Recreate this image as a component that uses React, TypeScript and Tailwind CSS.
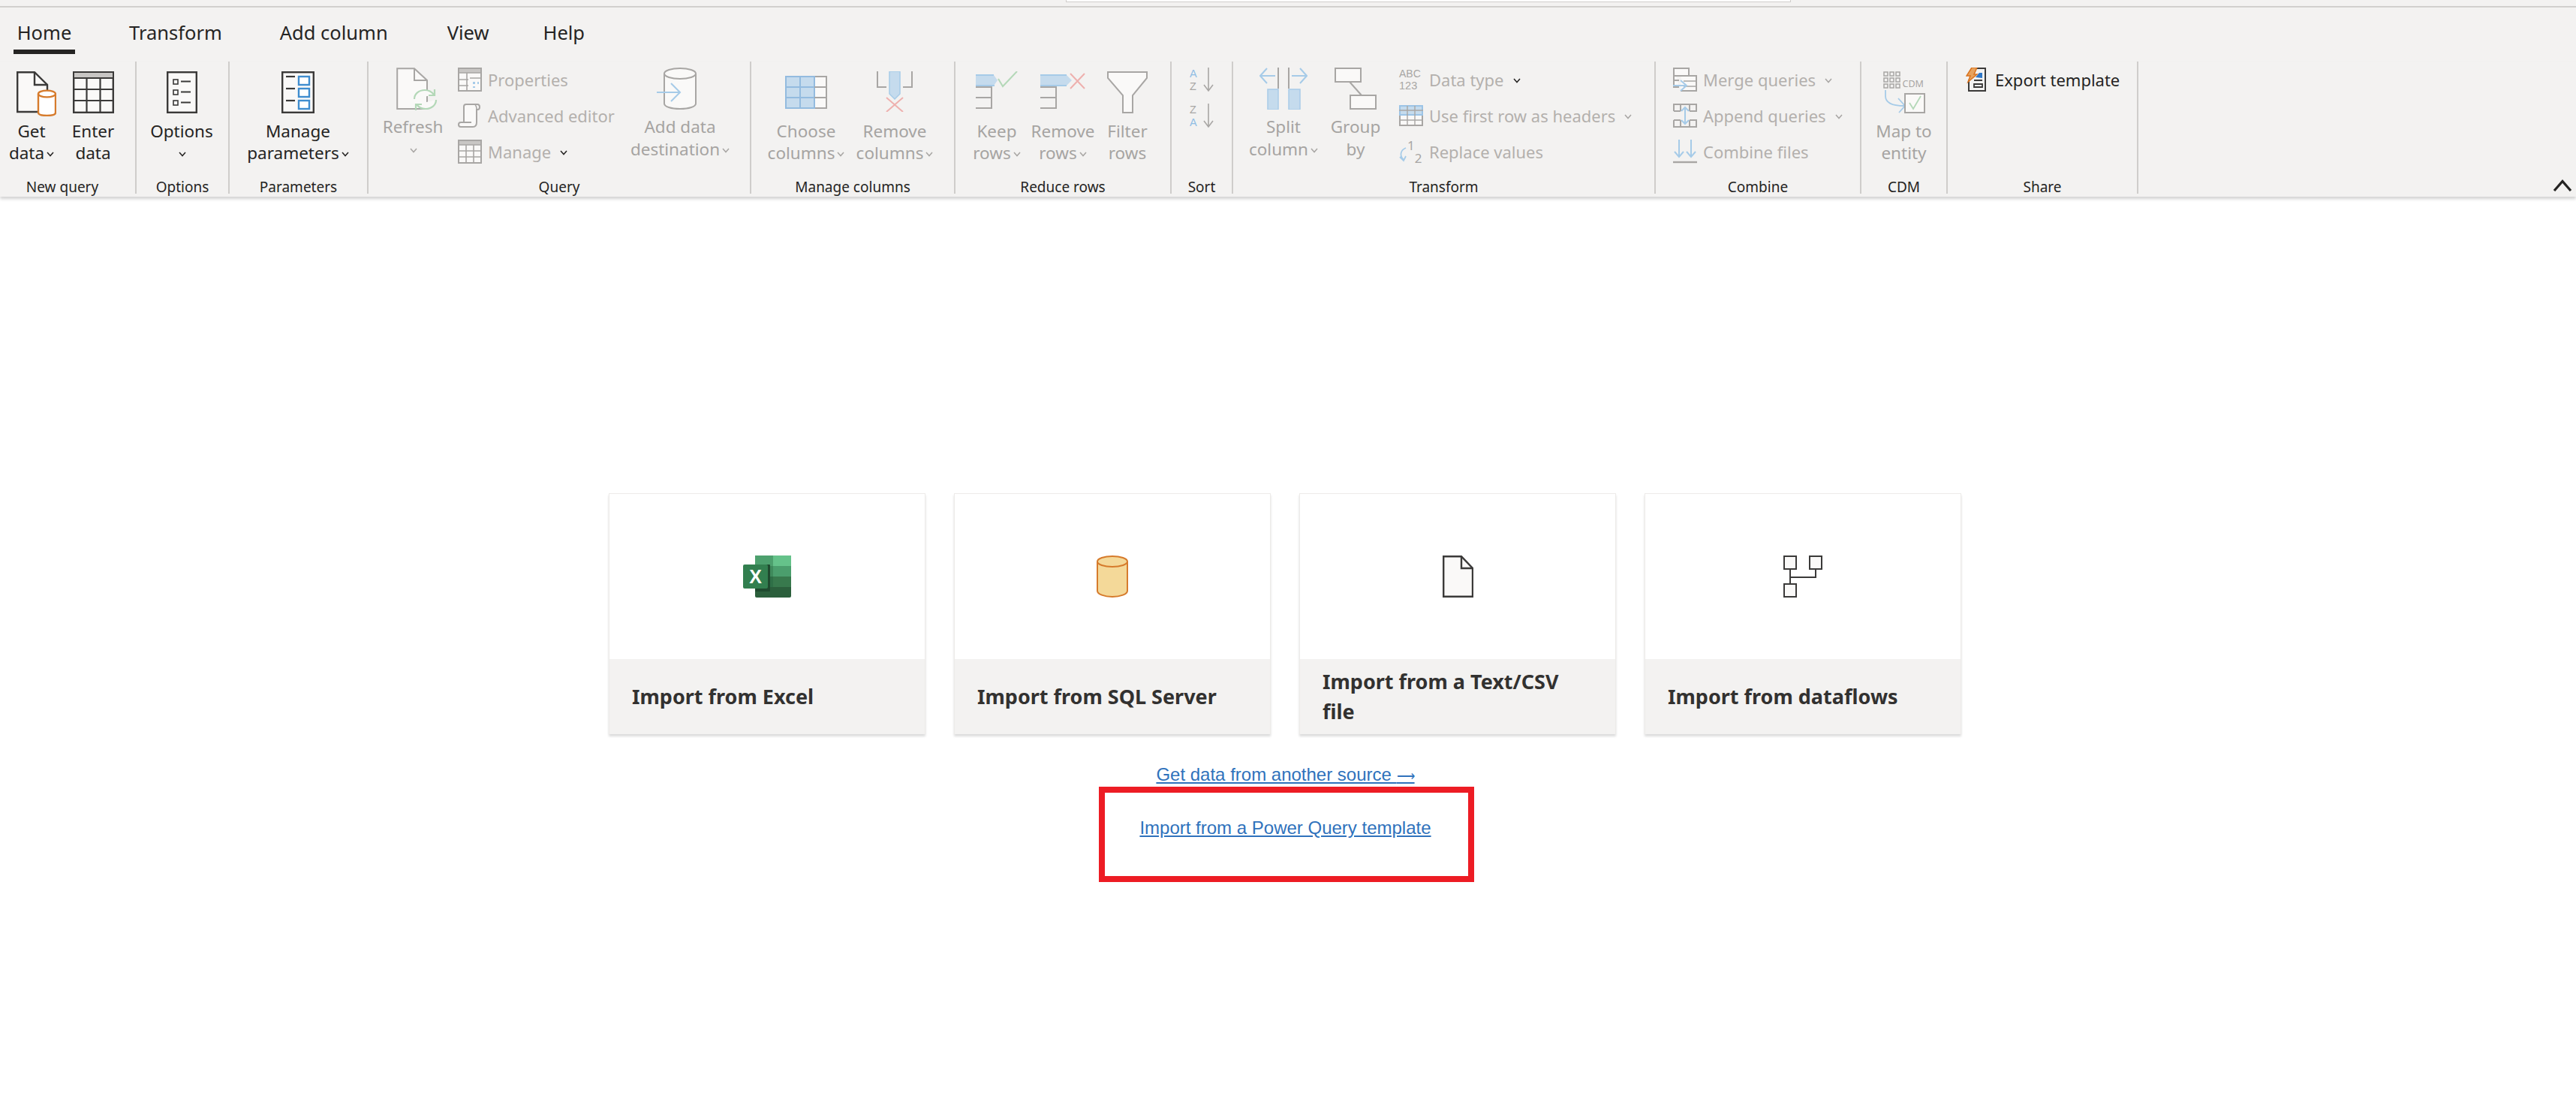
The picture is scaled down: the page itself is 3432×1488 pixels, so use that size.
import type { ReactNode } from "react";

const DARK = "#3b3a39";
const GRAY = "#a8a6a4";
const SOFT = "#faf9f8";
const BLUE = "#a6cbe8";
const BLUE_FILL = "#c5dbed";
const GREEN = "#b4d8b8";
const RED = "#eeb0ae";

function Chevron({ dark = false, faded = false }: { dark?: boolean; faded?: boolean }) {
  const stroke = dark ? "#252423" : faded ? "#a8a6a4" : "#252423";
  return (
    <svg width="10" height="7" viewBox="0 0 10 7" className="ml-[3px] inline-block align-middle" fill="none">
      <path d="M1 1l4 4.6L9 1" stroke={stroke} strokeWidth="1.5" />
    </svg>
  );
}

function Large({
  w,
  icon,
  lines,
  chevron = false,
  loweredChevron = false,
  disabled = false,
  high = false,
}: {
  w: string;
  icon: ReactNode;
  lines: string[];
  chevron?: boolean;
  loweredChevron?: boolean;
  disabled?: boolean;
  high?: boolean;
}) {
  return (
    <div className={`flex shrink-0 flex-col items-center ${w} ${high ? "pt-[8px]" : "pt-[13px]"}`}>
      <div className={`flex items-start justify-center ${high ? "h-[64px]" : "h-[65px]"}`}>{icon}</div>
      <div
        className={`whitespace-nowrap text-center text-[22.5px] ${high ? "leading-[30px]" : "leading-[29px]"} ${
          disabled ? "text-[#a6a4a2]" : "text-[#252423]"
        }`}
      >
        {lines.map((line, i) => (
          <div key={line}>
            {line}
            {chevron && i === lines.length - 1 ? <Chevron faded={disabled} /> : null}
          </div>
        ))}
        {loweredChevron ? (
          <div>
            <Chevron faded={disabled} />
          </div>
        ) : null}
      </div>
    </div>
  );
}

function Small({
  icon,
  label,
  chevron,
}: {
  icon: ReactNode;
  label: string;
  chevron?: "dark" | "faded";
}) {
  return (
    <div className="flex h-[32px] items-center gap-[8px]">
      <div className="flex w-[32px] shrink-0 justify-center">{icon}</div>
      <span className="whitespace-nowrap text-[22px] leading-[32px] text-[#b3b0ad]">{label}</span>
      {chevron ? (
        <span className="ml-[1px]">
          <Chevron dark={chevron === "dark"} faded={chevron === "faded"} />
        </span>
      ) : null}
    </div>
  );
}

function Group({ w, label, pr = "", children }: { w: string; label: string; pr?: string; children: ReactNode }) {
  return (
    <section className={`flex h-[176px] shrink-0 flex-col border-r-2 border-[#cfcdcb] ${w}`}>
      <div className="flex min-h-0 flex-1">{children}</div>
      <div className={`h-[18px] whitespace-nowrap text-center text-[19px] leading-[18px] text-[#252423] ${pr}`}>{label}</div>
    </section>
  );
}

function GetDataIcon() {
  return (
    <svg width="66" height="60" viewBox="-13 0 66 60" fill="none">
      <path d="M1.2 1.2H24L41 18V54H1.2Z" fill={SOFT} stroke={DARK} strokeWidth="2.4" />
      <path d="M24 1.2V18H41.5" stroke={DARK} strokeWidth="2.4" />
      <path d="M29 30V55c0 2.6 5 4 11.5 4s11.5-1.4 11.5-4V30" fill="#fff" stroke="#d67b2c" strokeWidth="2.4" />
      <ellipse cx="40.5" cy="30" rx="11.5" ry="4.4" fill="#fff" stroke="#d67b2c" strokeWidth="2.4" />
    </svg>
  );
}

function EnterDataIcon() {
  return (
    <svg width="55" height="56" viewBox="0 0 55 56" fill="none">
      <rect x="1.2" y="1.2" width="52.6" height="53.6" fill={SOFT} stroke={DARK} strokeWidth="2.4" />
      <rect x="2" y="2" width="51" height="7" fill="#c8c6c4" />
      <path d="M0 9h55M0 24h55M0 39h55M18.5 9v46M36.5 9v46" stroke={DARK} strokeWidth="2.2" />
    </svg>
  );
}

function OptionsIcon() {
  return (
    <svg width="41" height="56" viewBox="0 0 41 56" fill="none">
      <rect x="1.2" y="1.2" width="38.6" height="53.6" fill={SOFT} stroke={DARK} strokeWidth="2.4" />
      {[11, 25, 39].map((y) => (
        <g key={y}>
          <rect x="9" y={y} width="6" height="6" fill="none" stroke={DARK} strokeWidth="1.6" />
          <path d={`M19 ${y + 2.5}h13`} stroke={DARK} strokeWidth="2" />
        </g>
      ))}
    </svg>
  );
}

function ParamsIcon() {
  return (
    <svg width="44" height="56" viewBox="0 0 44 56" fill="none">
      <rect x="1.2" y="1.2" width="41.6" height="53.6" fill={SOFT} stroke={DARK} strokeWidth="2.4" />
      {[7, 23, 39].map((y) => (
        <g key={y}>
          <path d={`M6 ${y}h12`} stroke={DARK} strokeWidth="2.2" />
          <rect x="23" y={y} width="14" height="11" fill="#fff" stroke="#3f8dcf" strokeWidth="2.4" />
        </g>
      ))}
    </svg>
  );
}

function RefreshIcon() {
  return (
    <svg width="68" height="60" viewBox="-12 0 68 60" fill="none">
      <path d="M1.2 1.2H24L41 17V55H1.2Z" fill={SOFT} stroke={GRAY} strokeWidth="2" />
      <path d="M24 1.2V17H41" stroke={GRAY} strokeWidth="2" />
      <path d="M24 42c0-7 6-12 14-12 5 0 9 2 12 6M53 43c0 7-6 12-14 12-5 0-9-2-12-6" fill={SOFT} stroke={GREEN} strokeWidth="2.2" />
      <path d="M51 29v8h-8M26 57v-8h8" stroke={GREEN} strokeWidth="2.2" />
    </svg>
  );
}

function PropertiesIcon() {
  return (
    <svg width="32" height="32" viewBox="0 0 32 32" fill="none">
      <rect x="1" y="1" width="30" height="30" fill={SOFT} stroke={GRAY} strokeWidth="2" />
      <rect x="2" y="2" width="28" height="5" fill="#c8c6c4" />
      <path d="M0 7h32M0 16h14M0 24h14M12 7v24M16 14h16" stroke={GRAY} strokeWidth="1.6" />
      <path d="M20 19h3v3h-3zM26 19h2v3h-2zM20 25h3v2h-3z" fill={BLUE} />
    </svg>
  );
}

function ScrollIcon() {
  return (
    <svg width="32" height="32" viewBox="0 0 32 32" fill="none">
      <path d="M8 25V4c0-2 1-3 3-3h15c2 0 3 1.5 3 3.5S28 8 26 8h-1v17c0 4-2 6-5 6H4c-2 0-3-1.5-3-3s1-3 3-3h14" fill={SOFT} stroke={GRAY} strokeWidth="2" />
      <path d="M23 2c2 1 2 5 2 6" stroke={GRAY} strokeWidth="1.6" />
    </svg>
  );
}

function GridIcon() {
  return (
    <svg width="32" height="32" viewBox="0 0 32 32" fill="none">
      <rect x="1" y="1" width="30" height="30" fill={SOFT} stroke={GRAY} strokeWidth="2" />
      <rect x="2" y="2" width="28" height="5" fill="#c8c6c4" />
      <path d="M0 7h32M0 15h32M0 23h32M11 7V32M21 7V32" stroke={GRAY} strokeWidth="1.6" />
    </svg>
  );
}

function DestinationIcon() {
  return (
    <svg width="62" height="56" viewBox="0 0 62 56" fill="none">
      <path d="M10 8V48c0 4 9 7 21 7s21-3 21-7V8" fill={SOFT} stroke={GRAY} strokeWidth="2" />
      <ellipse cx="31" cy="8" rx="21" ry="7" fill={SOFT} stroke={GRAY} strokeWidth="2" />
      <path d="M0 33h31M19 21l12 12-12 12" stroke={BLUE} strokeWidth="2" />
    </svg>
  );
}

function ChooseColumnsIcon() {
  return (
    <svg width="56" height="44" viewBox="0 0 56 44" fill="none">
      <rect x="1" y="1" width="54" height="42" fill={SOFT} stroke={GRAY} strokeWidth="2" />
      <rect x="1" y="1" width="38" height="42" fill={BLUE_FILL} stroke="#93bbdf" strokeWidth="2" />
      <path d="M20 1v42M1 15h38M1 29h38" stroke="#93bbdf" strokeWidth="2" />
      <path d="M39 15h16M39 29h16" stroke={GRAY} strokeWidth="2" />
    </svg>
  );
}

function RemoveColumnsIcon() {
  return (
    <svg width="48" height="54" viewBox="0 0 48 54" fill="none">
      <path d="M1 0V21H13M47 0V21H35" stroke={GRAY} strokeWidth="2" />
      <path d="M17 0H31V30L24 37 17 30Z" fill={BLUE_FILL} stroke={BLUE} strokeWidth="1.5" />
      <path d="M13 35L35 54M35 35L13 54" stroke={RED} strokeWidth="2" />
    </svg>
  );
}

function KeepRowsIcon() {
  return (
    <svg width="56" height="50" viewBox="0 0 56 50" fill="none">
      <path d="M0 5H24L29 12 24 19H0Z" fill={BLUE_FILL} />
      <path d="M0 5H24M0 19H25" stroke={BLUE} strokeWidth="2" />
      <path d="M30 10L36 20 55 0" stroke={GREEN} strokeWidth="2" />
      <path d="M0 21H21V49H0M0 35H21" stroke={GRAY} strokeWidth="2" />
    </svg>
  );
}

function RemoveRowsIcon() {
  return (
    <svg width="60" height="50" viewBox="0 0 60 50" fill="none">
      <path d="M0 5H35L42 12 35 19H0Z" fill={BLUE_FILL} />
      <path d="M0 5H35M0 19H35" stroke={BLUE} strokeWidth="2" />
      <path d="M40 3L59 23M59 3L40 23" stroke={RED} strokeWidth="2" />
      <path d="M0 21H21V49H0M0 35H21" stroke={GRAY} strokeWidth="2" />
    </svg>
  );
}

function FilterIcon() {
  return (
    <svg width="54" height="56" viewBox="0 0 54 56" fill="none">
      <path d="M1 1H53V9L34 32V55H21V32L1 9Z" fill={SOFT} stroke={GRAY} strokeWidth="2" />
    </svg>
  );
}

function SortIcon({ top, bottom }: { top: string; bottom: string }) {
  return (
    <div className="flex h-[33px] w-[32px] justify-between">
      <div className="flex flex-col font-['Liberation_Sans',sans-serif] text-[14.5px] leading-[16.5px]">
        <span className={top === "A" ? "text-[#8fbde4]" : "text-[#a8a6a4]"}>{top}</span>
        <span className={bottom === "A" ? "text-[#8fbde4]" : "text-[#a8a6a4]"}>{bottom}</span>
      </div>
      <svg width="14" height="33" viewBox="0 0 14 33" fill="none">
        <path d="M7 0V31M1 23l6 8 6-8" stroke={GRAY} strokeWidth="1.6" />
      </svg>
    </div>
  );
}

function SplitIcon() {
  return (
    <svg width="64" height="56" viewBox="0 0 64 56" fill="none">
      <path d="M25 0V28M39 0V28" stroke={GRAY} strokeWidth="2" />
      <rect x="11" y="29" width="14" height="27" fill={BLUE_FILL} stroke="#a9cbe8" strokeWidth="1.5" />
      <rect x="39" y="29" width="15" height="27" fill={BLUE_FILL} stroke="#a9cbe8" strokeWidth="1.5" />
      <path d="M21 11H2M10 1L1 11l9 10M43 11H62M54 1l9 10-9 10" stroke={BLUE} strokeWidth="2" />
    </svg>
  );
}

function GroupByIcon() {
  return (
    <svg width="56" height="56" viewBox="0 0 56 56" fill="none">
      <rect x="1" y="1" width="34" height="18" fill={SOFT} stroke={GRAY} strokeWidth="2" />
      <rect x="21" y="37" width="34" height="18" fill={SOFT} stroke={GRAY} strokeWidth="2" />
      <path d="M20 19L36 37" stroke={GRAY} strokeWidth="2" />
    </svg>
  );
}

function DataTypeIcon() {
  return (
    <div className="flex h-[33px] w-[32px] flex-col font-['Liberation_Sans',sans-serif] text-[#a8a6a4]">
      <span className="text-[14px] leading-[16px]">ABC</span>
      <span className="text-[14.5px] leading-[17px]">123</span>
    </div>
  );
}

function FirstRowIcon() {
  return (
    <svg width="32" height="28" viewBox="0 0 32 28" fill="none">
      <rect x="1" y="1" width="30" height="26" fill={SOFT} stroke={GRAY} strokeWidth="2" />
      <rect x="1" y="1" width="30" height="12" fill={BLUE_FILL} stroke="#9cc4e6" strokeWidth="2" />
      <path d="M0 20h32M11 1V27M21 1V27M0 7h32" stroke={GRAY} strokeWidth="1.4" />
    </svg>
  );
}

function ReplaceIcon() {
  return (
    <div className="flex h-[33px] w-[32px] text-[17px] leading-[16px] text-[#a8a6a4]">
      <svg width="11" height="33" viewBox="0 0 11 33" fill="none">
        <path d="M9 11C2 14 0 21 6 27M1 23l5 5 3-6" stroke={BLUE} strokeWidth="1.8" />
      </svg>
      <span className="self-start">1</span>
      <span className="self-end">2</span>
    </div>
  );
}

function MergeIcon() {
  return (
    <svg width="32" height="32" viewBox="0 0 32 32" fill="none">
      <path d="M1 1H21V11H1ZM1 1V26H8M1 17H8M11 11H31V31H10" fill={SOFT} stroke={GRAY} strokeWidth="2" />
      <path d="M14 18H31M14 25H31" stroke={GRAY} strokeWidth="1.6" />
      <path d="M0 24H17M10 17l8 7-8 7" stroke={BLUE} strokeWidth="2" />
    </svg>
  );
}

function AppendIcon() {
  return (
    <svg width="32" height="32" viewBox="0 0 32 32" fill="none">
      <path d="M1 10V1H31V10H22M10 10H1M1 22V31H31V22H22M10 22H1M10 1V10M22 1V10M10 22V31M22 22V31" stroke={GRAY} strokeWidth="2" />
      <path d="M16 5V27M11 10l5-5 5 5M11 22l5 5 5-5" stroke={BLUE} strokeWidth="2" />
    </svg>
  );
}

function CombineIcon() {
  return (
    <svg width="32" height="32" viewBox="0 0 32 32" fill="none">
      <path d="M8 0V23M2 16l6 7 6-7M24 0V23M18 16l6 7 6-7" stroke={BLUE} strokeWidth="2" />
      <path d="M0 30H32" stroke={GRAY} strokeWidth="2.4" />
    </svg>
  );
}

function CdmIcon() {
  const dots = [0, 8, 16];
  return (
    <div className="flex w-[56px] flex-col">
      <div className="flex h-[24px] items-end gap-[3px]">
        <svg width="23" height="24" viewBox="0 0 23 24" fill="none">
          {dots.map((y) =>
            dots.map((x) => <rect key={`${x}-${y}`} x={x + 1} y={y + 1} width="5" height="5" stroke={GRAY} strokeWidth="1.5" />),
          )}
        </svg>
        <span className="text-[12.5px] leading-[14px] text-[#a8a6a4]">CDM</span>
      </div>
      <svg width="56" height="32" viewBox="0 24 56 32" fill="none">
        <path d="M3 25V33C3 42 12 46 28 46M20 36l9 10-8 9" stroke={BLUE} strokeWidth="1.8" />
        <rect x="29" y="30" width="26" height="25" fill={SOFT} stroke={GRAY} strokeWidth="2" />
        <path d="M35 42l5 8 10-17" stroke={GREEN} strokeWidth="1.8" />
      </svg>
    </div>
  );
}

function ExportIcon() {
  return (
    <svg width="27" height="32" viewBox="0 0 27 32" fill="none">
      <path d="M14 1H26V31H4V16" stroke={DARK} strokeWidth="2" />
      <path d="M8 0H15L11 9H15L3 19 6 11H1Z" fill="#e8a25c" stroke="#d9731f" strokeWidth="1.5" />
      <path d="M13 13L18 7H22V14Z" fill="#2e77c8" />
      <path d="M11 17H22M11 22H22V26H11Z" stroke={DARK} strokeWidth="1.8" />
    </svg>
  );
}

function ExcelIcon() {
  return (
    <svg width="64" height="56" viewBox="0 0 64 56">
      <rect x="16" width="48" height="56" rx="2" fill="#2b5f3c" />
      <rect x="16" width="24" height="14" fill="#4da06e" />
      <rect x="40" width="24" height="14" fill="#65c28a" />
      <rect x="16" y="14" width="24" height="14" fill="#3f8a5c" />
      <rect x="40" y="14" width="24" height="14" fill="#4b9e6d" />
      <rect x="16" y="28" width="24" height="14" fill="#2f6f47" />
      <rect x="40" y="28" width="24" height="14" fill="#38794d" />
      <rect x="16" y="12" width="20" height="36" rx="1" fill="#1f4a2f" />
      <rect y="12" width="33" height="32" rx="2" fill="#327f4f" />
      <text x="16.5" y="37" textAnchor="middle" fontFamily="'Liberation Sans', sans-serif" fontWeight="700" fontSize="25" fill="#fff">
        X
      </text>
    </svg>
  );
}

function CylinderIcon() {
  return (
    <svg width="42" height="56" viewBox="0 0 42 56" fill="none">
      <path d="M1 8V47c0 4.5 9 8 20 8s20-3.5 20-8V8" fill="#f4d999" stroke="#d67b2c" strokeWidth="2" />
      <ellipse cx="21" cy="8" rx="20" ry="7" fill="#f4d999" stroke="#d67b2c" strokeWidth="2" />
    </svg>
  );
}

function DocIcon() {
  return (
    <svg width="41" height="56" viewBox="0 0 41 56" fill="none">
      <path d="M1.2 1.2H25L40 17V54.8H1.2Z" fill={SOFT} stroke={DARK} strokeWidth="2.4" />
      <path d="M25 1.2V17H40" stroke={DARK} strokeWidth="2.4" />
    </svg>
  );
}

function FlowIcon() {
  return (
    <svg width="52" height="56" viewBox="0 0 52 56" fill="none">
      <rect x="1" y="1" width="16" height="17" fill={SOFT} stroke={DARK} strokeWidth="2" />
      <rect x="35" y="1" width="16" height="17" fill={SOFT} stroke={DARK} strokeWidth="2" />
      <rect x="1" y="38" width="16" height="17" fill={SOFT} stroke={DARK} strokeWidth="2" />
      <path d="M9 18V38M43 18V29H9" stroke={DARK} strokeWidth="2" />
    </svg>
  );
}

function Ribbon() {
  return (
    <div className="flex h-[180px] bg-[#f3f2f1] shadow-[0_3px_4px_rgba(0,0,0,0.18)]">
      <Group w="w-[182px]" label="New query" pr="pr-[14px]">
        <Large w="w-[84px]" icon={<GetDataIcon />} lines={["Get", "data"]} chevron />
        <Large w="w-[80px]" icon={<EnterDataIcon />} lines={["Enter", "data"]} />
      </Group>
      <Group w="w-[124px]" label="Options">
        <Large w="w-[120px]" icon={<OptionsIcon />} lines={["Options"]} loweredChevron />
      </Group>
      <Group w="w-[185px]" label="Parameters">
        <Large w="w-[182px]" icon={<ParamsIcon />} lines={["Manage", "parameters"]} chevron />
      </Group>
      <Group w="w-[510px]" label="Query">
        <div className="flex pl-[17px]">
          <Large w="w-[84px]" icon={<RefreshIcon />} lines={["Refresh"]} loweredChevron disabled high />
          <div className="ml-[18px] flex w-[226px] flex-col gap-[16px] pt-[8px]">
            <Small icon={<PropertiesIcon />} label="Properties" />
            <Small icon={<ScrollIcon />} label="Advanced editor" />
            <Small icon={<GridIcon />} label="Manage" chevron="dark" />
          </div>
          <Large w="w-[140px]" icon={<DestinationIcon />} lines={["Add data", "destination"]} chevron disabled high />
        </div>
      </Group>
      <Group w="w-[272px]" label="Manage columns">
        <div className="flex pl-[8px]">
          <Large w="w-[130px]" icon={<div className="pt-[6px]"><ChooseColumnsIcon /></div>} lines={["Choose", "columns"]} chevron disabled />
          <Large w="w-[106px]" icon={<RemoveColumnsIcon />} lines={["Remove", "columns"]} chevron disabled />
        </div>
      </Group>
      <Group w="w-[288px]" label="Reduce rows">
        <div className="flex pl-[5px]">
          <Large w="w-[100px]" icon={<KeepRowsIcon />} lines={["Keep", "rows"]} chevron disabled />
          <Large w="w-[76px]" icon={<RemoveRowsIcon />} lines={["Remove", "rows"]} chevron disabled />
          <Large w="w-[96px]" icon={<FilterIcon />} lines={["Filter", "rows"]} disabled />
        </div>
      </Group>
      <Group w="w-[82px]" label="Sort">
        <div className="flex flex-col gap-[15px] pl-[24px] pt-[8px]">
          <SortIcon top="A" bottom="Z" />
          <SortIcon top="Z" bottom="A" />
        </div>
      </Group>
      <Group w="w-[563px]" label="Transform">
        <div className="flex pl-[9px]">
          <Large w="w-[116px]" icon={<SplitIcon />} lines={["Split", "column"]} chevron disabled high />
          <Large w="w-[76px]" icon={<GroupByIcon />} lines={["Group", "by"]} disabled high />
          <div className="ml-[20px] flex flex-col gap-[16px] pt-[8px]">
            <Small icon={<DataTypeIcon />} label="Data type" chevron="dark" />
            <Small icon={<FirstRowIcon />} label="Use first row as headers" chevron="faded" />
            <Small icon={<ReplaceIcon />} label="Replace values" />
          </div>
        </div>
      </Group>
      <Group w="w-[274px]" label="Combine">
        <div className="ml-[23px] flex flex-col gap-[16px] pt-[8px]">
          <Small icon={<MergeIcon />} label="Merge queries" chevron="faded" />
          <Small icon={<AppendIcon />} label="Append queries" chevron="faded" />
          <Small icon={<CombineIcon />} label="Combine files" />
        </div>
      </Group>
      <Group w="w-[115px]" label="CDM">
        <Large w="w-[113px]" icon={<CdmIcon />} lines={["Map to", "entity"]} disabled />
      </Group>
      <Group w="w-[254px]" label="Share">
        <div className="ml-[24px] mt-[8px] flex h-[32px] items-center gap-[12px]">
          <ExportIcon />
          <span className="whitespace-nowrap text-[22px] text-[#252423]">Export template</span>
        </div>
      </Group>
      <div className="flex flex-1 items-end justify-end pb-[7px] pr-[5px]">
        <svg width="26" height="16" viewBox="0 0 26 16" fill="none">
          <path d="M2 15L13 2.5 24 15" stroke="#252423" strokeWidth="3.2" />
        </svg>
      </div>
    </div>
  );
}

function Card({ icon, title }: { icon: ReactNode; title: string }) {
  return (
    <div className="flex h-[321px] w-[422px] flex-col border-x border-t border-[#edebe9] shadow-[0_3px_3px_rgba(0,0,0,0.14)]">
      <div className="flex h-[220px] shrink-0 items-start justify-center bg-white pt-[82px]">{icon}</div>
      <div className="flex flex-1 items-center bg-[#f3f2f1] pl-[30px] pr-[40px] text-[27px] font-bold leading-[40px] text-[#323130]">
        {title}
      </div>
    </div>
  );
}

export default function App() {
  const tabs = [
    { label: "Transform", ml: "ml-[72px]" },
    { label: "Add column", ml: "ml-[77px]" },
    { label: "View", ml: "ml-[79px]" },
    { label: "Help", ml: "ml-[72px]" },
  ];
  return (
    <div className="min-h-[1488px] w-[3432px] overflow-hidden bg-white font-['Noto_Sans',sans-serif]">
      <div className="h-[10px] border-b-2 border-[#d2d0ce] bg-[#f3f2f1]">
        <div className="ml-[1420px] h-[3px] w-[966px] border-x border-b border-[#cfcdcb] bg-white" />
      </div>
      <nav className="flex h-[72px] bg-[#f3f2f1] pl-[18px] pt-[10px] text-[25.5px] leading-[46px] text-[#252423]">
        <div className="flex h-[52px] flex-col items-center">
          <span>Home</span>
          <span className="h-[6px] w-[82px] bg-[#252423]" />
        </div>
        {tabs.map((tab) => (
          <span key={tab.label} className={tab.ml}>
            {tab.label}
          </span>
        ))}
      </nav>
      <Ribbon />
      <main className="pt-[395px]">
        <div className="flex gap-[38px] pl-[811px]">
          <Card icon={<ExcelIcon />} title="Import from Excel" />
          <Card icon={<CylinderIcon />} title="Import from SQL Server" />
          <Card icon={<DocIcon />} title="Import from a Text/CSV file" />
          <Card icon={<FlowIcon />} title="Import from dataflows" />
        </div>
        <div className="ml-[1464px] mt-[37px] flex w-[500px] flex-col items-center font-['Liberation_Sans',sans-serif] text-[24px] text-[#2f72bc]">
          <a href="#" className="-ml-[3px] h-[33px] leading-[33px] underline">
            Get data from another source <span className="text-[17px]">⟶</span>
          </a>
          <div className="flex h-[127px] w-[500px] justify-center border-[8px] border-[#ed1c24] pt-[31px]">
            <a href="#" className="-ml-[3px] h-[32px] leading-[32px] underline">
              Import from a Power Query template
            </a>
          </div>
        </div>
      </main>
    </div>
  );
}
